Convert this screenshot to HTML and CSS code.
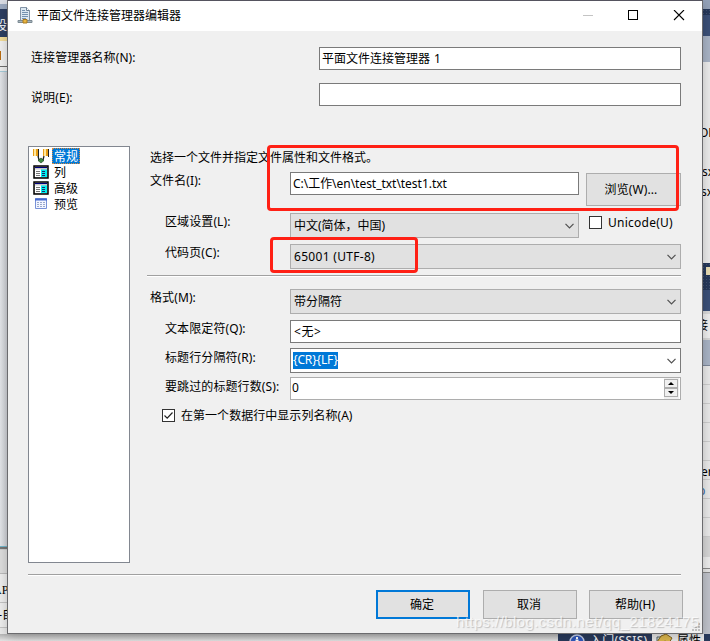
FILE: index.html
```html
<!DOCTYPE html>
<html lang="zh-CN">
<head>
<meta charset="utf-8">
<title>平面文件连接管理器编辑器</title>
<link rel="stylesheet" href="styles.css">
</head>
<body>
<div class="desktop">
  <div class="strip left">
    <div class="l-top"></div>
    <div class="l-navy"><span>设</span></div>
    <div class="l-gold"></div>
    <div class="l-tool"><i></i><b></b></div>
    <div class="l-line"></div>
    <div class="l-body"></div>
    <div class="l-gap"></div>
    <div class="l-head"></div>
    <div class="l-cell">AP</div>
    <div class="l-cell second">-自</div>
    <div class="l-rest"></div>
  </div>
  <div class="strip right">
    <div class="r-top"></div>
    <div class="r-dots"></div>
    <div class="r-navy"></div>
    <div class="r-blue"></div>
    <div class="r-list"><span class="t1">OD</span><span class="t2">sx</span><span class="t3">sx</span></div>
    <div class="r-dots tall"><i></i></div>
    <div class="r-navy second"></div>
    <div class="r-tab">接</div>
    <div class="r-blue second"></div>
    <div class="r-grid"><span class="t4">er</span><span class="t5">b</span></div>
    <div class="r-gray"></div>
    <div class="r-light"></div>
    <div class="r-status"></div>
  </div>
  <div class="bottom">
    <div class="b-tab dark">
      <svg width="16" height="16" viewBox="0 0 16 16"><circle cx="8" cy="8" r="7" fill="#3159bd" stroke="#c3cee8" stroke-width="1.4"/><path d="M8 3v2M6.500 6.500H8.500V12M6 12h5" stroke="#fff" stroke-width="2" fill="none"/></svg>
      <span>入门(SSIS)</span>
    </div>
    <div class="b-tab light">
      <svg width="17" height="14" viewBox="0 0 17 14"><path d="M1 3h12v10H1z" fill="#d8e2dc" stroke="#52606a"/><path d="M5 2l5-2 6 4-3 5-4-2-5 3-3-2z" fill="#dfb94e" stroke="#80621b"/><path d="M3 10h5M10 9l3 3" stroke="#477c55" stroke-width="2"/></svg>
      <span>属性</span>
    </div>
    <div class="b-end"></div>
  </div>
</div>

<main class="dialog">
  <header class="titlebar">
    <svg class="app-icon" width="16" height="17" viewBox="0 0 16 17">
      <path d="M3.500.5h6l3 3v10h-9z" fill="#dce8f2" stroke="#8293a6"/>
      <path d="M9.500.5v3h3" fill="#fff" stroke="#6b8095"/>
      <path d="M5 3.500h3M5 5.500h6M5 7.500h6M5 9.500h6M5 11.500h4" stroke="#7592b0"/>
      <path d="M1 13.500h14v2H1z" fill="#a8b5bd" stroke="#7d8b94"/>
      <path d="M6 12.500h4v3.500H6z" fill="#e8b440" stroke="#aa7a1d"/>
    </svg>
    <h1>平面文件连接管理器编辑器</h1>
    <svg class="controls" width="104" height="12" viewBox="0 0 104 12">
      <path d="M1 5.500h10" stroke="#c4c4c4"/>
      <rect x="46.500" y=".5" width="9" height="9" fill="none" stroke="#000"/>
      <path d="M92 0l10 10M102 0L92 10" stroke="#000" stroke-width="1.100"/>
    </svg>
  </header>

  <section class="identity">
    <label>连接管理器名称(N):</label><div class="field wide">平面文件连接管理器 1</div>
    <label>说明(E):</label><div class="field"></div>
  </section>

  <div class="workspace">
    <nav class="tree">
      <div class="node">
        <svg width="16" height="16" viewBox="0 0 16 16"><path d="M5 8l1 4h4l1-4" fill="none" stroke="#222" stroke-width="1.300"/><path d="M8 10l3 2.500L8 15l-3-2.500z" fill="#408a43" stroke="#183f1b" stroke-width=".6"/><path d="M5.500 1v9M15.500 1v8" stroke="#222"/><rect x="0" y="1" width="5" height="7" fill="#e99e16"/><rect x="10" y="1" width="5" height="7" fill="#e99e16"/><path d="M2 1v7M12 1v7" stroke="#ffe8a0" stroke-width="2"/></svg>
        <span class="selected">常规</span>
      </div>
      <div class="node">
        <svg width="16" height="16" viewBox="0 0 16 16"><path d="M1 2h14v12H1z" fill="#c8c8c8" stroke="#000" stroke-width="1.500"/><path d="M2 3.500h12" stroke="#00007c"/><path d="M2 5.500h6V13H2z" fill="#fff"/><path d="M8 5.500h6V13H8z" fill="#00f1f1"/><path d="M3 7.500h4M3 9.500h4M3 11.500h4" stroke="#777"/><path d="M9 7.500h3M9 9.500h3M9 11.500h3" stroke="#222864"/></svg>
        <span>列</span>
      </div>
      <div class="node">
        <svg width="16" height="16" viewBox="0 0 16 16"><path d="M1 2h14v12H1z" fill="#c8c8c8" stroke="#000" stroke-width="1.500"/><path d="M2 3.500h12" stroke="#00007c"/><path d="M2 5.500h6V13H2z" fill="#fff"/><path d="M8 5.500h6V13H8z" fill="#00f1f1"/><path d="M3 7.500h4M3 9.500h4M3 11.500h4" stroke="#777"/><path d="M9 7.500h3M9 9.500h3M9 11.500h3" stroke="#222864"/></svg>
        <span>高级</span>
      </div>
      <div class="node">
        <svg width="16" height="16" viewBox="0 0 16 16"><path d="M2.500 2.500h11v10h-11z" fill="#f3f6ff" stroke="#7892d8"/><path d="M2 3.500h12" stroke="#4369cf" stroke-width="2"/><path d="M4 6.500h2M7 6.500h2M10 6.500h2M4 8.500h2M7 8.500h2M10 8.500h2M4 10.500h2M7 10.500h2M10 10.500h2" stroke="#9ba9cc"/></svg>
        <span>预览</span>
      </div>
    </nav>

    <section class="form">
      <p class="intro">选择一个文件并指定文件属性和文件格式。</p>
      <div class="row file"><label>文件名(I):</label><div class="field path">C:\工作\en\test_txt\test1.txt</div><button class="button browse">浏览(W)...</button></div>
      <div class="row region"><label class="sub">区域设置(L):</label><div class="combo">中文(简体，中国)<svg class="chev" viewBox="0 0 9 6"><path d="M.5.8l4 4 4-4"/></svg></div><i class="check"></i><span class="unicode">Unicode(U)</span></div>
      <div class="row codepage"><label class="sub">代码页(C):</label><div class="combo"><span class="code">65001 (UTF-8)</span><svg class="chev" viewBox="0 0 9 6"><path d="M.5.8l4 4 4-4"/></svg></div></div>
      <div class="rule"></div>
      <div class="row format"><label>格式(M):</label><div class="combo">带分隔符<svg class="chev" viewBox="0 0 9 6"><path d="M.5.8l4 4 4-4"/></svg></div></div>
      <div class="row qualifier"><label class="sub">文本限定符(Q):</label><div class="field">&lt;无&gt;</div></div>
      <div class="row delimiter"><label class="sub">标题行分隔符(R):</label><div class="combo editable"><mark>{CR}{LF}</mark><svg class="chev" viewBox="0 0 9 6"><path d="M.5.8l4 4 4-4"/></svg></div></div>
      <div class="row skip"><label class="sub">要跳过的标题行数(S):</label><div class="field number">0<div class="spinner"><i class="up"></i><i class="down"></i></div></div></div>
      <div class="row names"><i class="check"><svg viewBox="0 0 11 11"><path d="M1.500 5.500l2.700 2.700L9.500 2.500"/></svg></i><span>在第一个数据行中显示列名称(A)</span></div>
    </section>
  </div>

  <div class="footer-rule"></div>
  <footer><button class="button primary">确定</button><button class="button">取消</button><button class="button">帮助(H)</button></footer>

  <div class="highlight file-mark"></div>
  <div class="highlight code-mark"></div>
  <svg class="grip" width="9" height="9" viewBox="0 0 9 9"><path d="M6 0h2v2H6zM3 3h2v2H3zM6 3h2v2H6zM0 6h2v2H0zM3 6h2v2H3zM6 6h2v2H6z"/></svg>
</main>
<div class="watermark">https://blog.csdn.net/qq_21824175</div>
</body>
</html>
```
FILE: styles.css
```css
* { box-sizing: border-box; }
body {
  position: relative;
  width: 710px;
  height: 641px;
  margin: 0;
  overflow: hidden;
  font: 12px/16px "Noto Sans", "Noto Sans CJK SC", sans-serif;
  color: #000;
}
h1, p { margin: 0; font: inherit; }
i, b { display: block; }

/* Application behind the dialog */
.desktop {
  display: grid;
  grid-template-columns: 8px 1fr 8px;
  grid-template-rows: 634px 7px;
  height: 641px;
  background: linear-gradient(#55535f 0 2px, #e6e6e6 2px);
}
.strip { display: flex; flex-direction: column; overflow: hidden; white-space: nowrap; }
.left { grid-column: 1; }
.right { grid-column: 3; }
.l-top { height: 9px; background: linear-gradient(#d9dce4 0 4px, #9ba9c0 4px); }
.l-navy { height: 28px; padding-top: 9px; background: #2d3e61; color: #fff; }
.l-navy span { margin-left: -5px; }
.l-gold { height: 4px; background: #f3dc98; }
.l-tool { height: 25px; padding-top: 10px; display: flex; justify-content: space-between; background: #f0f0f0; }
.l-tool i { width: 1px; height: 9px; background: #b96c12; }
.l-tool b { width: 1px; height: 10px; background: repeating-linear-gradient(#444 0 1px, #f0f0f0 1px 3px); }
.l-line { height: 6px; border-top: 1px solid #6d6d6d; border-bottom: 1px solid #a5cad8; background: #eee; }
.l-body { height: 474px; background: linear-gradient(90deg, #e3e5e9, #c9ccd1); }
.l-gap { height: 4px; border-top: 1px solid #73b5ca; border-bottom: 1px solid #ccc; background: #777; }
.l-head { height: 24px; background: #ddd; border-bottom: 1px solid #bbb; }
.l-cell { height: 29px; padding-top: 8px; border-bottom: 1px solid #c4c4c4; background: #eee; text-indent: -7px; font-family: "Liberation Serif", "Noto Sans CJK SC", serif; }
.l-cell.second { height: 25px; padding-top: 4px; text-indent: -2px; }
.l-rest { flex: 1; background: #e9e9e9; }

.r-top { height: 9px; background: #94a2b9; }
.r-dots { height: 6px; background: radial-gradient(#40516f 30%, #26385a 35%) 0 0 / 3px 3px; }
.r-navy { height: 21px; background: #3b5078; }
.r-blue { height: 26px; background: #a8b3c5; }
.r-list { position: relative; height: 201px; background: #ebebeb; }
.r-list span, .r-grid span { position: absolute; left: 0; }
.r-list .t1 { top: 63px; left: -3px; }
.r-list .t2 { top: 102px; }
.r-list .t3 { top: 122px; left: -1px; }
.r-dots.tall { height: 27px; padding: 4px 0 0 4px; }
.r-dots i { width: 6px; height: 8px; background: #e9ddb4; }
.r-navy.second { height: 21px; }
.r-tab { height: 29px; padding-top: 4px; text-indent: -6px; background: #eee; border-top: 3px solid #d9d9d9; border-bottom: 2px solid #d5d5d5; }
.r-blue.second { height: 26px; border-bottom: 1px solid #7c8799; }
.r-grid { position: relative; height: 171px; background: repeating-linear-gradient(#e9e9e9 0 18px, #cdcdcd 18px 19px); }
.r-grid .t4 { top: 98px; left: -1px; }
.r-grid .t5 { top: 117px; color: #3665a0; left: -4px; }
.r-gray { height: 20px; background: #d5d5d5; }
.r-light { height: 12px; background: #ececec; border-bottom: 1px solid #888; }
.r-status { flex: 1; margin-top: 3px; background: #bfc2ca; border-top: 1px solid #888; }

.bottom { grid-column: 1 / -1; display: flex; padding-left: 558px; background: linear-gradient(#b5b5b5, #e5e5e5); }
.b-tab { display: flex; height: 7px; overflow: hidden; font-size: 12px; line-height: 13px; white-space: nowrap; }
.b-tab.dark { width: 94px; padding-left: 11px; gap: 5px; background: #293a5c; color: #fff; }
.b-tab.dark span { letter-spacing: .3px; }
.b-tab.light { width: 52px; padding-left: 4px; gap: 4px; background: #e9e9e9; }
.b-end { width: 6px; background: #293a5c; }

/* Dialog window */
.dialog {
  position: absolute;
  left: 7px;
  top: 0;
  width: 696px;
  height: 634px;
  border: 1px solid #6b6b6e;
  border-top-color: #55535f;
  background: #f0f0f0;
  box-shadow: 0 3px 10px rgba(0, 0, 0, .22);
}
.titlebar { display: flex; align-items: center; height: 30px; padding: 0 16px 0 9px; background: #fff; }
.app-icon { margin-top: -2px; }
.titlebar h1 { margin-left: 4px; }
.controls { margin-left: auto; }

.identity {
  display: grid;
  grid-template-columns: 288px 362px;
  grid-template-rows: 23px 23px;
  row-gap: 13px;
  padding: 16px 0 0 23px;
}
.identity label { line-height: 22px; letter-spacing: .1px; }
.identity label:nth-of-type(2) { line-height: 29px; }
.field {
  height: 23px;
  padding: 0 2px;
  border: 1px solid #7a7a7a;
  background: #fff;
  line-height: 22px;
  white-space: nowrap;
}
.field.wide { word-spacing: 1px; }
.workspace { display: flex; height: 417px; margin: 40px 21px 0 20px; }
.tree { width: 102px; border: 1px solid #828790; background: #fff; padding: 1px 0 0 4px; }
.node { display: flex; height: 16px; gap: 3px; }
.node span { padding: 0 2px; line-height: 17px; height: 16px; }
.node .selected { width: 28px; background: #0078d7; color: #fff; outline: 1px dotted #d78a40; outline-offset: -1px; }

.form { width: 531px; margin-left: 20px; white-space: nowrap; }
.intro { height: 26px; padding-top: 4px; }
.row { display: flex; }
.row label { width: 140px; flex: none; letter-spacing: .1px; padding-top: 1px; }
.row label.sub { padding-left: 15px; }
.row .combo, .row .field { flex: 1; }
.combo {
  display: flex;
  align-items: center;
  justify-content: space-between;
  height: 25px;
  padding: 0 4px 0 3px;
  border: 1px solid #adadad;
  background: #e1e1e1;
}
.chev { width: 9px; height: 6px; overflow: visible; fill: none; stroke: #505050; stroke-width: 1.2; }
.button { height: 29px; padding: 0 2px 0 0; border: 1px solid #adadad; background: #e1e1e1; color: #000; font: inherit; }
.check { display: block; flex: none; width: 13px; height: 13px; border: 1px solid #333; background: #fff; }
.check svg { display: block; fill: none; stroke: #222; stroke-width: 1.2; }

.file { height: 41px; }
.row .path { flex: 0 0 289px; letter-spacing: -.03px; }
.browse { width: 95px; height: 33px; margin: 1px 0 0 7px; padding-right: 5px; letter-spacing: .1px; }
.region { height: 31px; }
.region .combo { flex: 0 0 289px; }
.region .check { margin: 3px 6px 0 10px; }
.unicode { padding-top: 2px; letter-spacing: .25px; }
.codepage { height: 31px; }
.code { letter-spacing: .3px; }
.rule { height: 2px; margin-left: -3px; border-top: 1px solid #a0a0a0; border-bottom: 1px solid #fff; }
.format { margin-top: 12px; height: 31px; }
.qualifier { height: 28px; }
.delimiter { height: 29px; }
.row.delimiter label, .row.skip label { padding-top: 2px; }
.combo.editable { padding-left: 2px; background: #fff; border-color: #7a7a7a; }
mark { height: 17px; line-height: 16px; letter-spacing: -.15px; background: #0078d7; color: #fff; }
.skip { height: 32px; }
.number { display: flex; justify-content: space-between; padding: 0 1px; border-color: #adadad; line-height: 20px; }
.qualifier .field { padding-left: 3px; letter-spacing: .6px; }
.spinner { width: 15px; padding-top: 1px; background: #f0f0f0; }
.spinner i { display: flex; justify-content: center; align-items: center; height: 9px; margin-right: 1px; border: 1px solid #adadad; }
.spinner i::after { content: ""; border: 3px solid transparent; }
.spinner .up::after { border-top: 0; border-bottom-color: #000; }
.spinner .down::after { border-bottom: 0; border-top-color: #000; }
.names { margin-left: 12px; gap: 6px; line-height: 14px; letter-spacing: .04px; }

.footer-rule { height: 2px; margin: 11px 21px 0 20px; border-top: 1px solid #a0a0a0; border-bottom: 1px solid #fff; }
footer { display: flex; justify-content: flex-end; gap: 13px; padding: 14px 19px 0 0; }
footer .button { width: 94px; }
footer .button:last-child { margin-left: -1px; }
.button.primary { border: 2px solid #0078d7; }

/* Annotations over the form */
.highlight { position: absolute; border: 3px solid #ff2015; border-radius: 4px; }
.file-mark { left: 259px; top: 144px; width: 412px; height: 66px; }
.code-mark { left: 262px; top: 236px; width: 148px; height: 36px; }
.grip { position: absolute; right: 1px; bottom: 1px; fill: #bfbfbf; }
.watermark {
  position: absolute;
  left: 456px;
  top: 612px;
  font: 15px/20px "Liberation Sans", sans-serif;
  letter-spacing: .4px;
  color: rgba(255, 255, 255, .7);
  text-shadow: 1px 1px 1px rgba(120, 120, 120, .4);
  white-space: nowrap;
}
```
